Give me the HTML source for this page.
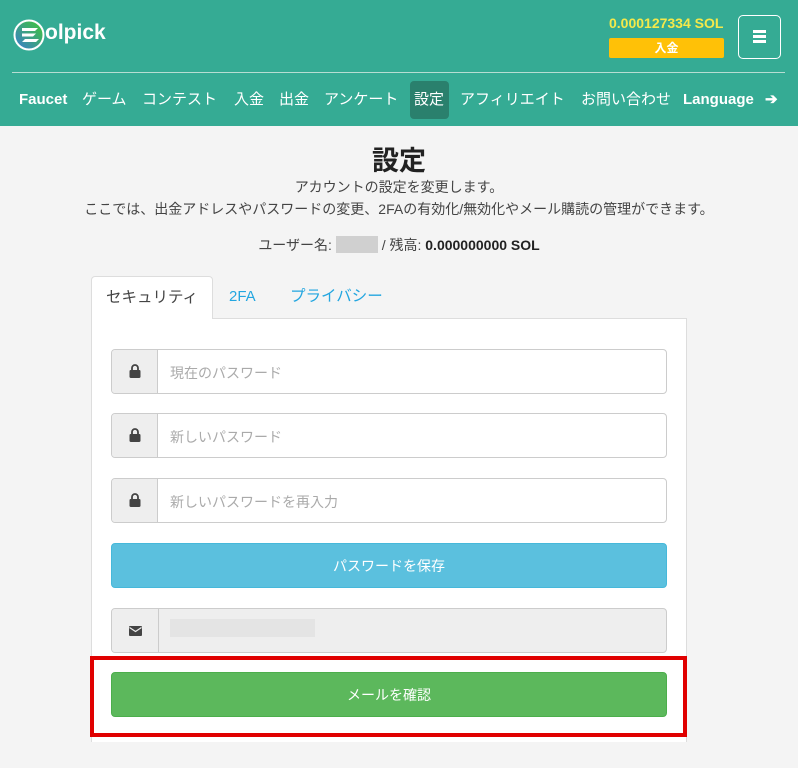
<!DOCTYPE html>
<html><head><meta charset="utf-8"><style>
*{box-sizing:border-box;margin:0;padding:0}
body{width:798px;height:768px;overflow:hidden;background:#f4f4f4;font-family:"Liberation Sans","Noto Sans CJK JP",sans-serif;color:#333;position:relative}
.hdr{position:absolute;left:0;top:0;width:798px;height:126px;background:#35ab94}
.abs{position:absolute}
.nav{position:absolute;top:89px;left:0;height:22px;color:#fff;font-size:15px;white-space:nowrap}
.nav span{position:absolute;top:0;height:22px;line-height:22px}
.inp{position:absolute;left:111px;width:556px;height:45px;border:1px solid #ccc;border-radius:4px;background:#fff}
.inp .ad{position:absolute;left:0;top:0;width:46px;height:43px;background:#eee;border-right:1px solid #ccc;border-radius:3px 0 0 3px}
.inp .ph{position:absolute;left:58px;top:13px;font-size:14px;color:#aaa}
.lock{position:absolute;left:17px;top:14px;width:12px;height:14px}
.btn{position:absolute;left:111px;width:556px;height:45px;border-radius:4px;color:#fff;font-size:14px;text-align:center;line-height:44px}
</style></head><body>
<div class="hdr">
 <svg class="abs" style="left:13px;top:19px" width="32" height="32" viewBox="0 0 32 32"><defs><linearGradient id="g" x1="0" y1="1" x2="1" y2="0"><stop offset="0" stop-color="#3a7bd5"/><stop offset="1" stop-color="#3fc930"/></linearGradient></defs><circle cx="16" cy="16" r="14.5" fill="url(#g)" stroke="#fff" stroke-width="2"/><path d="M9 9h16l-3 3H9zM9 14.5h14l-3 3H9zM12 20h14l-3 3H9z" fill="#fff"/></svg>
 <div class="abs" style="left:45px;top:21px;font-size:21px;font-weight:bold;color:#fff">olpick</div>
 <div class="abs" style="left:609px;top:15px;font-size:14px;font-weight:bold;color:#f5e94a">0.000127334 SOL</div>
 <div class="abs" style="left:609px;top:38px;width:115px;height:20px;background:#ffc107;color:#fff;font-size:12px;font-weight:bold;text-align:center;line-height:20px;border-radius:2px">入金</div>
 <div class="abs" style="left:738px;top:15px;width:43px;height:44px;border:1.5px solid #fff;border-radius:5px"><div style="position:absolute;left:14px;top:14px;width:13px;height:3px;background:#fff;box-shadow:0 5px 0 #fff,0 10px 0 #fff"></div></div>
 <div class="abs" style="left:12px;top:72px;width:773px;height:1px;background:#b7ddd3"></div>
 <div class="abs" style="left:410px;top:81px;width:39px;height:38px;background:#2a806d;border-radius:4px"></div>
 <div class="nav">
  <span style="left:19px;font-weight:bold">Faucet</span>
  <span style="left:82px">ゲーム</span>
  <span style="left:142px">コンテスト</span>
  <span style="left:234px">入金</span>
  <span style="left:279px">出金</span>
  <span style="left:324px">アンケート</span>
  <span style="left:414px">設定</span>
  <span style="left:460px">アフィリエイト</span>
  <span style="left:581px">お問い合わせ</span>
  <span style="left:683px;font-weight:bold">Language</span>
  <span style="left:765px;font-weight:bold">➔</span>
 </div>
</div>
<div class="abs" style="left:0;top:139px;width:798px;text-align:center;font-size:27px;font-weight:bold;color:#222">設定</div>
<div class="abs" style="left:0;top:177px;width:798px;text-align:center;font-size:14px;color:#444">アカウントの設定を変更します。</div>
<div class="abs" style="left:0;top:199px;width:798px;text-align:center;font-size:14px;color:#444">ここでは、出金アドレスやパスワードの変更、2FAの有効化/無効化やメール購読の管理ができます。</div>
<div class="abs" style="left:0;top:235px;width:798px;text-align:center;font-size:14px;color:#444">ユーザー名: <span style="display:inline-block;width:42px;height:17px;background:#d0d0d0;vertical-align:-3px"></span> / 残高: <b style="color:#222">0.000000000 SOL</b></div>
<div class="abs" style="left:91px;top:318px;width:596px;height:424px;background:#fff;border:1px solid #ddd;border-bottom:none"></div>
<div class="abs" style="left:91px;top:276px;width:122px;height:43px;background:#fff;border:1px solid #ddd;border-bottom:none;border-radius:4px 4px 0 0;font-size:15.5px;color:#444;text-align:center;line-height:42px">セキュリティ</div>
<div class="abs" style="left:229px;top:287px;height:20px;font-size:15px;color:#23a6e0;line-height:20px">2FA</div>
<div class="abs" style="left:290px;top:287px;height:20px;font-size:15.5px;color:#23a6e0;line-height:20px">プライバシー</div>
<div class="inp" style="top:349px"><div class="ad"><svg class="lock" viewBox="0 0 12 14"><path d="M3 6V4a3 3 0 0 1 6 0V6" fill="none" stroke="#444" stroke-width="1.8"/><rect x="0.5" y="6" width="11" height="8" rx="1.2" fill="#444"/></svg></div><div class="ph">現在のパスワード</div></div>
<div class="inp" style="top:413px"><div class="ad"><svg class="lock" viewBox="0 0 12 14"><path d="M3 6V4a3 3 0 0 1 6 0V6" fill="none" stroke="#444" stroke-width="1.8"/><rect x="0.5" y="6" width="11" height="8" rx="1.2" fill="#444"/></svg></div><div class="ph">新しいパスワード</div></div>
<div class="inp" style="top:478px"><div class="ad"><svg class="lock" viewBox="0 0 12 14"><path d="M3 6V4a3 3 0 0 1 6 0V6" fill="none" stroke="#444" stroke-width="1.8"/><rect x="0.5" y="6" width="11" height="8" rx="1.2" fill="#444"/></svg></div><div class="ph">新しいパスワードを再入力</div></div>
<div class="btn" style="top:543px;background:#5bc0de;border:1px solid #46b8da">パスワードを保存</div>
<div class="inp" style="top:608px;background:#eee"><div class="ad" style="width:47px"><svg class="abs" style="left:17px;top:17px" width="13" height="10" viewBox="0 0 13 10"><rect width="13" height="10" rx="1" fill="#444"/><path d="M0.5 1.5l6 4 6-4" fill="none" stroke="#eee" stroke-width="1.2"/></svg></div><div class="abs" style="left:58px;top:10px;width:145px;height:18px;background:#e4e4e4"></div></div>
<div class="abs" style="left:90px;top:656px;width:597px;height:81px;border:4px solid #e00000;background:#fff"></div>
<div class="btn" style="top:672px;background:#5cb85c;border:1px solid #4cae4c">メールを確認</div>
</body></html>
